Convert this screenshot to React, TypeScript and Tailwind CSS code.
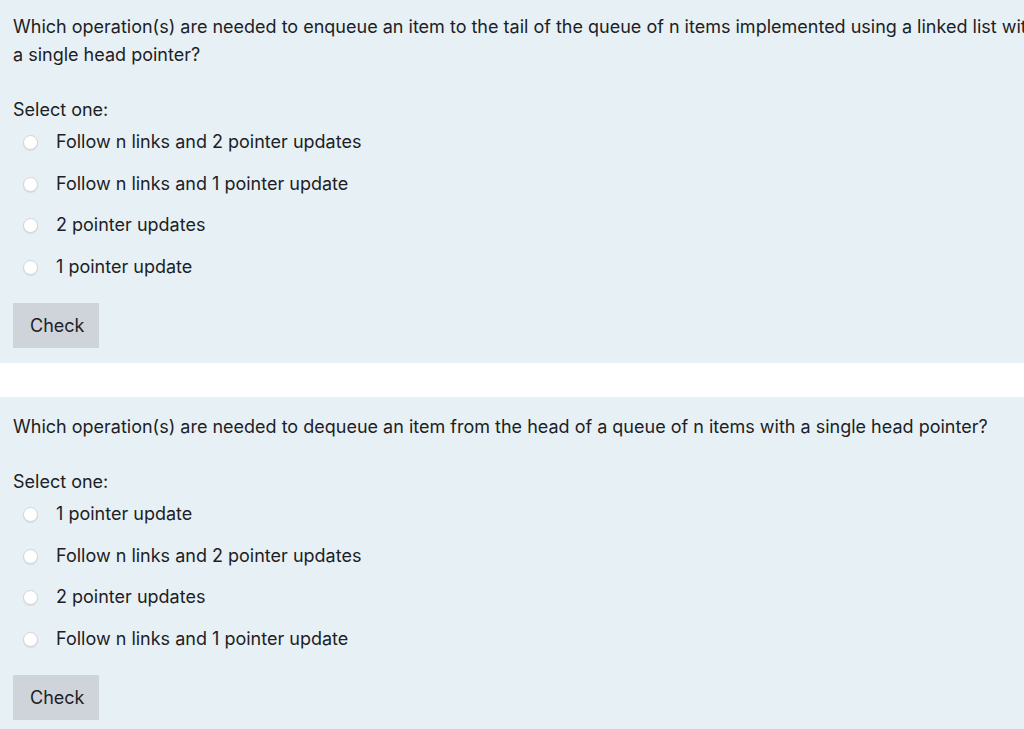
import { useState } from "react";

interface Question {
  text: string;
  options: string[];
}

const questions: Question[] = [
  {
    text: "Which operation(s) are needed to enqueue an item to the tail of the queue of n items implemented using a linked list with a single head pointer?",
    options: [
      "Follow n links and 2 pointer updates",
      "Follow n links and 1 pointer update",
      "2 pointer updates",
      "1 pointer update",
    ],
  },
  {
    text: "Which operation(s) are needed to dequeue an item from the head of a queue of n items with a single head pointer?",
    options: [
      "1 pointer update",
      "Follow n links and 2 pointer updates",
      "2 pointer updates",
      "Follow n links and 1 pointer update",
    ],
  },
];

// row gaps alternate 14 / 13 / 14 like the reference
const rowGaps = ["mt-[4px]", "mt-[14px]", "mt-[13px]", "mt-[14px]"];

function QuestionCard({ q, first }: { q: Question; first: boolean }) {
  const [picked, setPicked] = useState<number | null>(null);

  return (
    <div
      className={`w-[1052px] bg-[#e7f1f5] pl-[13px] pr-[10px] pb-[15px] ${
        first ? "pt-[13px]" : "pt-[16px]"
      }`}
    >
      <p className="leading-[28px]">{q.text}</p>

      <p className="mt-[27px] leading-[28px]">Select one:</p>

      <div className="flex flex-col">
        {q.options.map((opt, i) => (
          <label
            key={opt}
            className={`flex h-[28px] items-center ${rowGaps[i]} cursor-pointer`}
            onClick={() => setPicked(i)}
          >
            <span className="ml-[10px] flex h-[15px] w-[15px] items-center justify-center rounded-full border border-[#cfd4d8] bg-white shadow-[0_1px_1px_rgba(0,0,0,0.08)]">
              {picked === i && (
                <span className="h-[7px] w-[7px] rounded-full bg-[#0f6cbf]" />
              )}
            </span>
            <span className="ml-[18px] leading-[28px]">{opt}</span>
          </label>
        ))}
      </div>

      <button className="mt-[22px] h-[45px] w-[86px] bg-[#ced4da] text-left pl-[17px] leading-[28px] text-[#1d2125]">
        Check
      </button>
    </div>
  );
}

export default function App() {
  return (
    <div className="h-[729px] w-[1024px] overflow-hidden bg-white font-['Inter',sans-serif] text-[18px] text-[#1d2125]">
      <QuestionCard q={questions[0]} first />
      <div className="h-[34px]" />
      <QuestionCard q={questions[1]} first={false} />
    </div>
  );
}
